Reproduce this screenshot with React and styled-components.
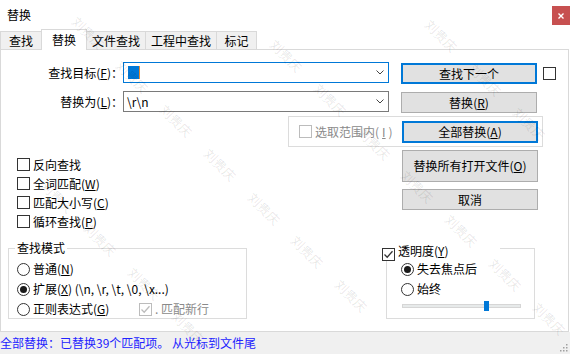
import React from 'react';
import styled, { createGlobalStyle } from 'styled-components';

const GlobalStyle = createGlobalStyle`
  html, body {
    margin: 0;
    padding: 0;
    background: #fff;
  }
  body {
    font-family: "Noto Sans CJK SC", "Noto Sans", sans-serif;
    font-size: 12px;
    color: #000;
  }
  * {
    box-sizing: border-box;
  }
`;

const Window = styled.div`
  position: relative;
  width: 570px;
  height: 354px;
  overflow: hidden;
  display: flex;
  flex-direction: column;
  background: #fff;
`;

const TitleBar = styled.div`
  height: 29px;
  flex-shrink: 0;
  display: flex;
  justify-content: space-between;
  align-items: flex-start;
`;

const Title = styled.div`
  padding-left: 7px;
  line-height: 29px;
`;

const CloseButton = styled.div`
  width: 18px;
  height: 19px;
  margin-top: 6px;
  background: #c75050;
  display: flex;
  align-items: center;
  justify-content: center;
`;

const TabStrip = styled.div`
  height: 20px;
  flex-shrink: 0;
  display: flex;
  align-items: flex-end;
  position: relative;
  z-index: 1;
`;

const Tab = styled.div`
  width: ${(p) => p.$w}px;
  height: ${(p) => (p.$active ? 21 : 18)}px;
  margin-left: ${(p) => (p.$first ? 0 : -1)}px;
  margin-bottom: ${(p) => (p.$active ? -1 : 0)}px;
  background: ${(p) => (p.$active ? '#fff' : '#f0f0f0')};
  border: 1px solid #d9d9d9;
  border-bottom: none;
  display: flex;
  align-items: center;
  justify-content: center;
  line-height: 14px;
  position: relative;
  z-index: ${(p) => (p.$active ? 2 : 1)};
`;

const Panel = styled.div`
  width: 569px;
  height: 283px;
  flex-shrink: 0;
  border: 1px solid #d9d9d9;
  padding-top: 11px;
  display: flex;
  flex-direction: column;
`;

const FieldRow = styled.div`
  display: flex;
  align-items: flex-start;
  height: 21px;
  margin-top: ${(p) => p.$top || 0}px;
`;

const Label = styled.div`
  width: 122px;
  text-align: right;
  line-height: 21px;
  white-space: nowrap;
`;

const Combo = styled.div`
  width: 266px;
  height: 21px;
  border: 1px solid ${(p) => (p.$focused ? '#0078d7' : '#7a7a7a')};
  background: #fff;
  display: flex;
  align-items: center;
  justify-content: space-between;
  padding: 0 4px 0 3px;
  line-height: 14px;
`;

const Selection = styled.span`
  display: block;
  width: 12px;
  height: 13px;
  margin-left: 1px;
  background: #0078d7;
  border-right: 1px solid #e88a2e;
`;

const Button = styled.div`
  width: 136px;
  height: ${(p) => p.$h || 21}px;
  margin-left: ${(p) => p.$left || 0}px;
  margin-top: ${(p) => p.$top || 0}px;
  background: #e1e1e1;
  border: ${(p) => (p.$default ? '2px solid #0078d7' : '1px solid #adadad')};
  display: flex;
  align-items: center;
  justify-content: center;
  line-height: 14px;
  white-space: nowrap;
`;

const Box = styled.span`
  width: 13px;
  height: 13px;
  flex-shrink: 0;
  border: 1px solid ${(p) => (p.$disabled ? '#bcbcbc' : '#333')};
  background: #fff;
  display: flex;
  align-items: center;
  justify-content: center;
  margin-top: ${(p) => p.$top || 0}px;
  margin-left: ${(p) => p.$left || 0}px;
`;

const SelectionGroup = styled.div`
  margin-top: 4px;
  margin-left: 287px;
  width: 255px;
  height: 31px;
  border: 1px solid #dcdcdc;
  display: flex;
  align-items: center;
  padding-left: 10px;
  padding-right: 4px;
`;

const CheckItem = styled.div`
  display: flex;
  align-items: center;
  gap: 3px;
  height: ${(p) => p.$h || 19}px;
  line-height: 14px;
  white-space: nowrap;
  color: ${(p) => (p.$disabled ? '#8a8a8a' : '#000')};
`;

const PushRight = styled.div`
  margin-left: auto;
`;

const OptionsRow = styled.div`
  display: flex;
  margin-top: 3px;
`;

const CheckList = styled.div`
  width: 401px;
  padding: 5px 0 0 16px;
  display: flex;
  flex-direction: column;
`;

const ButtonColumn = styled.div`
  display: flex;
  flex-direction: column;
  gap: 7px;
`;

const GroupRow = styled.div`
  display: flex;
  align-items: flex-start;
  margin-top: 10px;
`;

const Group = styled.fieldset`
  margin: 0 0 0 ${(p) => p.$left}px;
  width: ${(p) => p.$w}px;
  height: 78px;
  border: 1px solid #dcdcdc;
  padding: 4px 0 0 ${(p) => p.$pad}px;
  min-inline-size: 0;
`;

const Legend = styled.legend`
  padding: 0 2px;
  margin-left: ${(p) => p.$shift || 0}px;
  height: 14px;
  line-height: 14px;
  width: ${(p) => (p.$w ? `${p.$w}px` : 'auto')};
  display: flex;
  align-items: flex-start;
  gap: 3px;
  white-space: nowrap;
`;

const LegendText = styled.span`
  margin-top: ${(p) => p.$top || 0}px;
`;

const RadioItem = styled.div`
  display: flex;
  align-items: center;
  gap: 3px;
  height: 20px;
  line-height: 14px;
  white-space: nowrap;
`;

const ModeRow = styled.div`
  display: grid;
  grid-template-columns: 122px auto;
  align-items: center;
  height: 20px;
`;

const Circle = styled.span`
  width: 13px;
  height: 13px;
  flex-shrink: 0;
  border: 1px solid #333;
  border-radius: 50%;
  background: #fff;
  display: flex;
  align-items: center;
  justify-content: center;

  &::after {
    content: '';
    display: ${(p) => (p.$checked ? 'block' : 'none')};
    width: 7px;
    height: 7px;
    border-radius: 50%;
    background: #1a1a1a;
  }
`;

const Track = styled.div`
  position: relative;
  width: 119px;
  height: 4px;
  margin: 5px 0 0 1px;
  background: #e7eaea;
  border: 1px solid #d6d6d6;
`;

const Thumb = styled.div`
  position: absolute;
  left: 81px;
  top: -4px;
  width: 5px;
  height: 10px;
  background: #0078d7;
`;

const StatusBar = styled.div`
  flex: 1;
  background: #f0f0f0;
  display: flex;
  align-items: center;
  justify-content: space-between;
  color: #2323ff;
  line-height: 14px;
  white-space: nowrap;
`;

const Grip = styled.svg`
  align-self: flex-end;
  margin: 0 2px 2px 0;
`;

const Watermark = styled.div`
  position: absolute;
  inset: 0;
  overflow: hidden;
  pointer-events: none;
  z-index: 10;
`;

const WatermarkWord = styled.span`
  position: absolute;
  width: 40px;
  margin: -7px 0 0 -20px;
  transform: rotate(45deg);
  text-align: center;
  white-space: nowrap;
  color: rgba(0, 0, 0, 0.1);
  font-size: 13px;
  line-height: 14px;
`;

const Chevron = () => (
  <svg width="8" height="5" viewBox="0 0 8 5">
    <path d="M0.5 0.5 L4 4 L7.5 0.5" fill="none" stroke="#444" strokeWidth="1" />
  </svg>
);

const Check = ({ color }) => (
  <svg width="11" height="11" viewBox="0 0 11 11">
    <path d="M1.5 5.5 L4.2 8.2 L9.5 2.2" fill="none" stroke={color} strokeWidth="1.3" />
  </svg>
);

const Mn = ({ k }) => (
  <>
    (<u>{k}</u>)
  </>
);

const tabs = [
  { label: '查找', w: 42 },
  { label: '替换', w: 46, active: true },
  { label: '文件查找', w: 60 },
  { label: '工程中查找', w: 72 },
  { label: '标记', w: 41 },
];

const options = [
  { label: '反向查找' },
  { label: '全词匹配', key: 'W' },
  { label: '匹配大小写', key: 'C' },
  { label: '循环查找', key: 'P' },
];

// diagonal lines of the watermark: x where the line meets the top edge, and
// distance along the line of the first word centre
const watermarkLines = [
  { x: -140, phase: 30 },
  { x: 55, phase: 47 },
  { x: 230, phase: 17 },
  { x: 405, phase: 51 },
  { x: 580, phase: 1 },
];

const watermarkWords = watermarkLines.flatMap((line) =>
  Array.from({ length: 14 }, (_, i) => {
    const d = (line.phase + i * 62) * Math.SQRT1_2;
    return { x: line.x + d, y: d };
  }).filter((p) => p.x >= 19 && p.x <= 551 && p.y >= 19 && p.y <= 335)
);

const App = () => (
  <>
    <GlobalStyle />
    <Window>
      <TitleBar>
        <Title>替换</Title>
        <CloseButton>
          <svg width="6" height="6" viewBox="0 0 6 6">
            <path d="M0.5 0.5 L5.5 5.5 M5.5 0.5 L0.5 5.5" stroke="#fff" strokeWidth="1.4" />
          </svg>
        </CloseButton>
      </TitleBar>

      <TabStrip>
        {tabs.map((t, i) => (
          <Tab key={t.label} $w={t.w} $active={t.active} $first={i === 0}>
            {t.label}
          </Tab>
        ))}
      </TabStrip>

      <Panel>
        <FieldRow $top={1}>
          <Label>
            查找目标<Mn k="F" />：
          </Label>
          <Combo $focused>
            <Selection />
            <Chevron />
          </Combo>
          <Button $default $left={12} $top={1}>
            查找下一个
          </Button>
          <Box $left={6} $top={5} />
        </FieldRow>

        <FieldRow $top={8}>
          <Label>
            替换为<Mn k="L" />：
          </Label>
          <Combo>
            <span>\r\n</span>
            <Chevron />
          </Combo>
          <Button $left={12} $top={1}>
            替换<Mn k="R" />
          </Button>
        </FieldRow>

        <SelectionGroup>
          <CheckItem $disabled>
            <Box $disabled />
            选取范围内<Mn k="I" />
          </CheckItem>
          <PushRight>
            <Button $default $h={22}>
              全部替换<Mn k="A" />
            </Button>
          </PushRight>
        </SelectionGroup>

        <OptionsRow>
          <CheckList>
            {options.map((o) => (
              <CheckItem key={o.label}>
                <Box />
                <span>
                  {o.label}
                  {o.key && <Mn k={o.key} />}
                </span>
              </CheckItem>
            ))}
          </CheckList>
          <ButtonColumn>
            <Button $h={32}>
              替换所有打开文件<Mn k="O" />
            </Button>
            <Button>取消</Button>
          </ButtonColumn>
        </OptionsRow>

        <GroupRow>
          <Group $left={7} $w={239} $pad={8}>
            <Legend $shift={-2}>查找模式</Legend>
            <RadioItem>
              <Circle />
              <span>
                普通<Mn k="N" />
              </span>
            </RadioItem>
            <RadioItem>
              <Circle $checked />
              <span>
                扩展<Mn k="X" /> (\n, \r, \t, \0, \x...)
              </span>
            </RadioItem>
            <ModeRow>
              <RadioItem>
                <Circle />
                <span>
                  正则表达式<Mn k="G" />
                </span>
              </RadioItem>
              <CheckItem $disabled $h={20}>
                <Box $disabled>
                  <Check color="#bcbcbc" />
                </Box>
                . 匹配新行
              </CheckItem>
            </ModeRow>
          </Group>

          <Group $left={139} $w={149} $pad={14}>
            <Legend $shift={-21} $w={120}>
              <Box $top={7}>
                <Check color="#333" />
              </Box>
              <LegendText $top={3}>
                透明度<Mn k="Y" />
              </LegendText>
            </Legend>
            <RadioItem>
              <Circle $checked />
              <span>失去焦点后</span>
            </RadioItem>
            <RadioItem>
              <Circle />
              <span>始终</span>
            </RadioItem>
            <Track>
              <Thumb />
            </Track>
          </Group>
        </GroupRow>
      </Panel>

      <StatusBar>
        <span>全部替换：已替换39个匹配项。 从光标到文件尾</span>
        <Grip width="10" height="10" viewBox="0 0 10 10">
          {[
            [8, 2],
            [5, 5],
            [8, 5],
            [2, 8],
            [5, 8],
            [8, 8],
          ].map(([x, y]) => (
            <rect key={`${x}-${y}`} x={x} y={y} width="1.5" height="1.5" fill="#a0a0a0" />
          ))}
        </Grip>
      </StatusBar>

      <Watermark>
        {watermarkWords.map((w) => (
          <WatermarkWord key={`${w.x}-${w.y}`} style={{ left: w.x, top: w.y }}>
            刘贵庆
          </WatermarkWord>
        ))}
      </Watermark>
    </Window>
  </>
);

export default App;
